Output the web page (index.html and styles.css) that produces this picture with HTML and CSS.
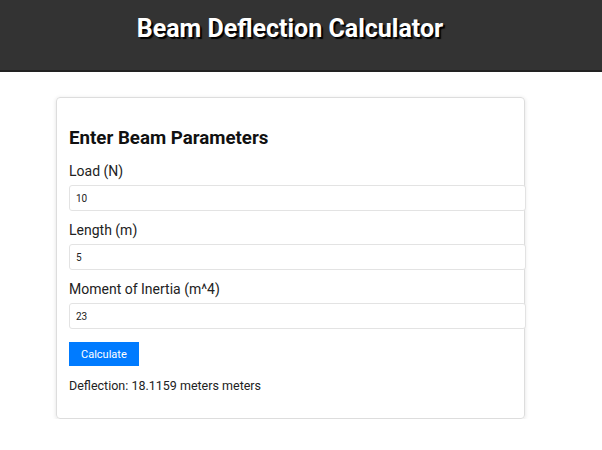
FILE: index.html
```html
<!DOCTYPE html>
<html lang="en">
<head>
    <meta charset="UTF-8">
    <meta name="viewport" content="width=device-width, initial-scale=1.0">
    <title>Beam Deflection Calculator</title>
    <link rel="stylesheet" href="styles.css">
</head>
<body>

<!-- header -->
<header>
    <h1>Beam Deflection Calculator</h1>
</header>

<!-- calculator card -->
<div class="container">
    <h2>Enter Beam Parameters</h2>
    <form id="beam-form">
        <label for="load">Load (N)</label>
        <input type="number" id="load" name="load" value="10">

        <label for="length">Length (m)</label>
        <input type="number" id="length" name="length" value="5">

        <label for="inertia">Moment of Inertia (m^4)</label>
        <input type="number" id="inertia" name="inertia" value="23">

        <button type="button" class="calc-button">Calculate</button>
    </form>
    <p class="result">Deflection: <span id="result">18.1159 meters</span> meters</p>
</div>

</body>
</html>
```

FILE: styles.css
```css
/* page */
body {
    font-family: Roboto, 'Liberation Sans', sans-serif;
    background-color: #fff;
    color: #222;
    margin: 0;
    padding: 0;
}

/* header */
header {
    background-color: #333;
    color: white;
    height: 70px;
    border-bottom: 2px solid #222;
    padding-right: 22px;
    text-align: center;
}

header h1 {
    margin: 0;
    padding-top: 14px;
    font-size: 25px;
    line-height: 29px;
    font-weight: bold;
    text-shadow: 2px 2px 1px #000;
}

/* card */
.container {
    width: 443px;
    margin: 25px 0 0 56px;
    padding: 12px 12px 14px;
    border: 1px solid #ddd;
    border-radius: 4px;
    box-shadow: 0 1px 4px rgba(0, 0, 0, 0.12);
}

.container h2 {
    font-size: 18.7px;
    line-height: 22px;
    margin: 17px 0 14px;
    color: #111;
}

label {
    display: block;
    font-size: 14px;
    line-height: 16px;
    color: #222;
    margin-bottom: 6px;
}

input[type="number"] {
    display: block;
    width: 100%;
    height: 24px;
    padding: 0 6px;
    border: 1px solid #e3e3e3;
    border-radius: 3px;
    font-family: Roboto, 'Liberation Sans', sans-serif;
    font-size: 10px;
    color: #222;
    margin-bottom: 11px;
    -moz-appearance: textfield;
}

input[type="number"]::-webkit-inner-spin-button {
    -webkit-appearance: none;
}

.calc-button {
    background-color: #007bff;
    color: white;
    border: none;
    padding: 0 12px;
    height: 24px;
    font-family: Roboto, 'Liberation Sans', sans-serif;
    font-size: 11px;
    margin-top: 2px;
    cursor: pointer;
}

.result {
    font-size: 12.5px;
    line-height: 16px;
    margin: 12px 0 10px;
    color: #222;
}
```
